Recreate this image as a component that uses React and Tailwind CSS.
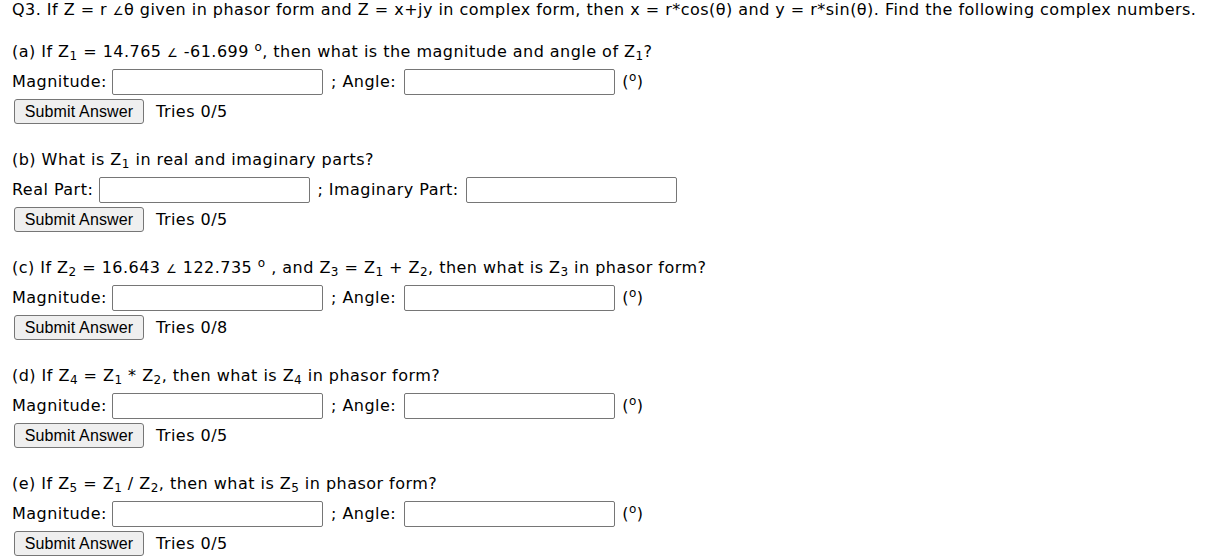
import React from 'react';

const inputCls =
  'inline-block align-middle w-[211px] h-[26px] border border-[#767676] rounded-[2px] bg-white px-1 text-[16px]';

const Z = ({ n }) => (
  <>
    Z<sub>{n}</sub>
  </>
);

const Ang = () => <span className="text-[12px]">∠</span>;
const Deg = () => <span className="relative -top-[6px] text-[12px]">o</span>;

const SubmitRow = ({ tries }) => (
  <div className="mt-[3px] flex items-center h-[25px]">
    <button className="ml-[2px] h-[25px] w-[130px] border border-[#767676] rounded-[3px] bg-[#efefef] text-[16px] tracking-[0.15px] text-black font-['Liberation_Sans',Arial,sans-serif]">
      Submit Answer
    </button>
    <span className="ml-[12px]">Tries {tries}</span>
  </div>
);

const Section = ({ title, first, second, angle, tries }) => (
  <div className="mt-[26px] first:mt-[22px]">
    <div className="leading-[20px] h-[20px] whitespace-nowrap">{title}</div>
    <div className="mt-[6px] h-[28px] flex items-center whitespace-pre">
      <span>{first} </span>
      <input className={`${inputCls} mr-[2px]`} />
      <span> ; {second} </span>
      <input className={`${inputCls} mx-[2px]`} />
      {angle && (
        <span>
          {' '}(<Deg />)
        </span>
      )}
    </div>
    <SubmitRow tries={tries} />
  </div>
);

export default function App() {
  return (
    <div className="min-h-[559px] w-[1206px] bg-white pl-3 text-[16px] tracking-[0.47px] text-black font-['DejaVu_Sans',Verdana,sans-serif]">
      <div className="leading-[20px] h-[20px] whitespace-nowrap">
        Q3. If Z = r <Ang />θ given in phasor form and Z = x+jy in complex form, then x = r*cos(θ) and y = r*sin(θ).
        Find the following complex numbers.
      </div>
      <div>
        <Section
          title={
            <>
              (a) If <Z n={1} /> = 14.765 <Ang /> -61.699 <Deg />, then what is the magnitude and angle of <Z n={1} />?
            </>
          }
          first="Magnitude:"
          second="Angle:"
          angle
          tries="0/5"
        />
        <Section
          title={
            <>
              (b) What is <Z n={1} /> in real and imaginary parts?
            </>
          }
          first="Real Part:"
          second="Imaginary Part:"
          tries="0/5"
        />
        <Section
          title={
            <>
              (c) If <Z n={2} /> = 16.643 <Ang /> 122.735 <Deg /> , and <Z n={3} /> = <Z n={1} /> + <Z n={2} />, then
              what is <Z n={3} /> in phasor form?
            </>
          }
          first="Magnitude:"
          second="Angle:"
          angle
          tries="0/8"
        />
        <Section
          title={
            <>
              (d) If <Z n={4} /> = <Z n={1} /> * <Z n={2} />, then what is <Z n={4} /> in phasor form?
            </>
          }
          first="Magnitude:"
          second="Angle:"
          angle
          tries="0/5"
        />
        <Section
          title={
            <>
              (e) If <Z n={5} /> = <Z n={1} /> / <Z n={2} />, then what is <Z n={5} /> in phasor form?
            </>
          }
          first="Magnitude:"
          second="Angle:"
          angle
          tries="0/5"
        />
      </div>
    </div>
  );
}
